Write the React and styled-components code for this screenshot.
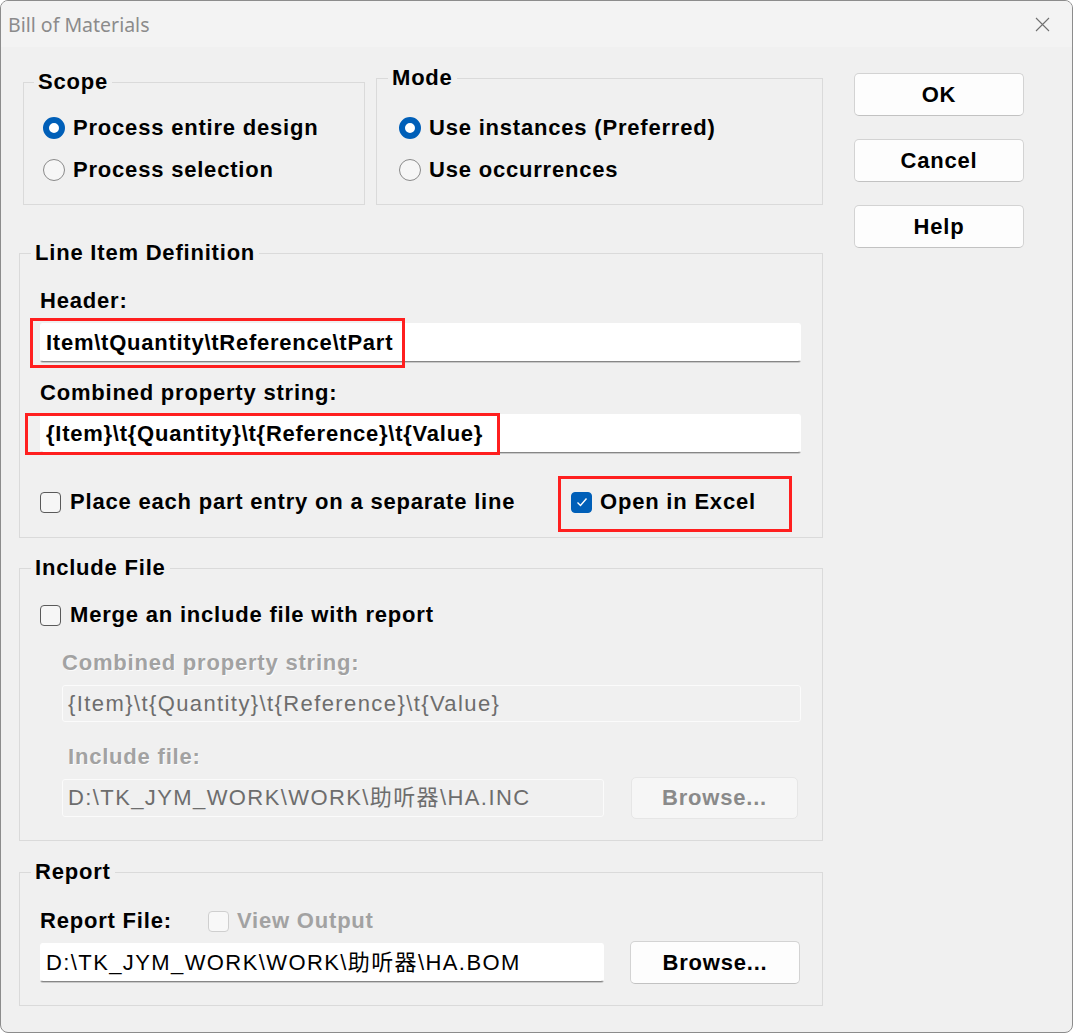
import React from "react";
import styled, { createGlobalStyle } from "styled-components";

const UI = `"Liberation Sans", "Noto Sans CJK SC", sans-serif`;

const GlobalStyle = createGlobalStyle`
  html, body { margin: 0; padding: 0; background: #ffffff; }
  body { font-family: ${UI}; }
  * { box-sizing: border-box; }
`;

const Window = styled.div`
  width: 1073px;
  height: 1033px;
  border: 1px solid #8c8c8c;
  border-radius: 8px;
  background: #f0f0f0;
  overflow: hidden;
  display: flex;
  flex-direction: column;
`;

const TitleBar = styled.div`
  flex: none;
  height: 46px;
  background: #f3f3f3;
  display: flex;
  align-items: center;
  justify-content: space-between;
  padding: 0 22px 0 7px;
`;

const Title = styled.span`
  font: 19.5px "Noto Sans", "Open Sans", sans-serif;
  color: #8b8b8b;
`;

const Body = styled.div`
  display: flex;
  gap: 31px;
  padding: 19px 0 0 18px;
`;

const Main = styled.div`
  width: 804px;
  display: flex;
  flex-direction: column;
`;

const Side = styled.div`
  width: 170px;
  display: flex;
  flex-direction: column;
  gap: 23px;
  padding-top: 7px;
`;

const TopRow = styled.div`
  display: flex;
  gap: 11px;
  align-items: stretch;
`;

const Group = styled.fieldset`
  margin: ${(p) => p.$mt || 0}px 0 0 ${(p) => p.$ml || 0}px;
  width: ${(p) => (p.$w ? `${p.$w}px` : "auto")};
  min-width: 0;
  padding: 0;
  border: 1px solid #dadada;
  display: flex;
  flex-direction: column;
`;

const Legend = styled.legend`
  margin-left: ${(p) => p.$ml ?? 11}px;
  padding: 0 4px;
  font: bold 22px/24px ${UI};
  letter-spacing: 0.8px;
  color: #000;
`;

const Content = styled.div`
  display: flex;
  flex-direction: column;
  padding: ${(p) => p.$pt}px ${(p) => p.$pr ?? 21}px ${(p) => p.$pb}px
    ${(p) => p.$pl ?? 20}px;
`;

const Label = styled.div`
  flex: none;
  width: ${(p) => (p.$w ? `${p.$w}px` : "auto")};
  height: 24px;
  margin-top: ${(p) => p.$mt || 0}px;
  margin-left: ${(p) => p.$ml || 0}px;
  font: bold 22px/24px ${UI};
  letter-spacing: 0.8px;
  white-space: nowrap;
  color: ${(p) => (p.$disabled ? "#a2a2a2" : "#000")};
  text-shadow: ${(p) => (p.$disabled ? "1px 1px 0 #fbfbfb" : "none")};
`;

const OptionRow = styled.label`
  display: flex;
  align-items: center;
  gap: ${(p) => p.$gap ?? 8}px;
  height: ${(p) => p.$h ?? 36}px;
  margin-top: ${(p) => p.$mt || 0}px;
  font: bold 22px/24px ${UI};
  letter-spacing: 0.8px;
  white-space: nowrap;
  color: ${(p) => (p.$disabled ? "#a2a2a2" : "#000")};
`;

const RadioDot = styled.span`
  flex: none;
  width: 22px;
  height: 22px;
  border-radius: 50%;
  background: ${(p) => (p.$on ? "#fff" : "#f6f6f6")};
  border: ${(p) => (p.$on ? "6.5px solid #005fb8" : "1.5px solid #8a8a8a")};
`;

const Box = styled.span`
  flex: none;
  width: 21px;
  height: 21px;
  border-radius: 4px;
  display: flex;
  align-items: center;
  justify-content: center;
  background: ${(p) => (p.$on ? "#005fb8" : p.$disabled ? "#f8f8f8" : "#f6f6f6")};
  border: 1.5px solid
    ${(p) => (p.$on ? "#005fb8" : p.$disabled ? "#cfcfcf" : "#5a5a5a")};
`;

const CheckRow = styled.div`
  display: grid;
  grid-template-columns: ${(p) => p.$cols || "auto"};
  align-items: center;
  height: 30px;
  margin-top: ${(p) => p.$mt || 0}px;
`;

const Field = styled.div`
  position: relative;
  flex: none;
  height: ${(p) => p.$h}px;
  width: ${(p) => (p.$w ? `${p.$w}px` : "auto")};
  margin-top: ${(p) => p.$mt || 0}px;
  padding-left: 5px;
  display: flex;
  align-items: center;
  white-space: nowrap;
  border-radius: 3px;
  font: ${(p) => (p.$bold ? "bold" : "normal")} 22px/24px ${UI};
  letter-spacing: ${(p) => (p.$bold ? 0.75 : 1.4)}px;
  background: ${(p) => (p.$disabled ? "#f0f0f0" : "#ffffff")};
  color: ${(p) => (p.$disabled ? "#6d6d6d" : "#000")};
  border: 1px solid ${(p) => (p.$disabled ? "#fbfbfb" : "#ffffff")};
  border-bottom: 1px solid ${(p) => (p.$disabled ? "#fbfbfb" : "#868686")};
  box-shadow: ${(p) => (p.$disabled ? "none" : "0 1px 0 #c9c9c9")};
`;

const FieldRow = styled.div`
  display: flex;
  align-items: center;
  gap: ${(p) => p.$gap}px;
  margin-top: ${(p) => p.$mt || 0}px;
  margin-left: ${(p) => p.$ml || 0}px;
`;

const Button = styled.button`
  flex: none;
  width: ${(p) => p.$w ?? 170}px;
  height: ${(p) => p.$h ?? 43}px;
  border-radius: 5px;
  font: bold 22px/24px ${UI};
  letter-spacing: 0.8px;
  padding: 0;
  color: ${(p) => (p.disabled ? "#8a8a8a" : "#000")};
  background: ${(p) => (p.disabled ? "#f6f6f6" : "#fdfdfd")};
  border: 1px solid ${(p) => (p.disabled ? "#e6e6e6" : "#d3d3d3")};
  border-bottom-color: ${(p) => (p.disabled ? "#e6e6e6" : "#c2c2c2")};
`;

const Annotated = styled.div`
  position: relative;
  display: flex;
  align-items: center;
  gap: 8px;
`;

const RedMark = styled.span`
  position: absolute;
  left: ${(p) => p.$x}px;
  top: ${(p) => p.$y}px;
  width: ${(p) => p.$w}px;
  height: ${(p) => p.$h}px;
  border: 3px solid #ff1f1f;
  pointer-events: none;
`;

const Indent = styled.div`
  margin-left: 22px;
  display: flex;
  flex-direction: column;
`;

const Check = ({ on, disabled }) => (
  <Box $on={on} $disabled={disabled}>
    {on && (
      <svg width="14" height="14" viewBox="0 0 14 14">
        <polyline
          points="2.5,7.5 5.5,10.5 11.5,3.5"
          fill="none"
          stroke="#fff"
          strokeWidth="1.4"
        />
      </svg>
    )}
  </Box>
);

export default function App() {
  return (
    <>
      <GlobalStyle />
      <Window>
        <TitleBar>
          <Title>Bill of Materials</Title>
          <svg width="15" height="15" viewBox="0 0 15 15">
            <path d="M1 1 L14 14 M14 1 L1 14" stroke="#707070" strokeWidth="1.1" />
          </svg>
        </TitleBar>
        <Body>
          <Main>
            <TopRow>
              <Group $w={342} $ml={4} $mt={4}>
                <Legend $ml={10}>Scope</Legend>
                <Content $pt={16} $pb={16} $pl={19}>
                  <OptionRow>
                    <RadioDot $on />
                    Process entire design
                  </OptionRow>
                  <OptionRow $mt={6}>
                    <RadioDot />
                    Process selection
                  </OptionRow>
                </Content>
              </Group>
              <Group $w={447}>
                <Legend>Mode</Legend>
                <Content $pt={20} $pb={16} $pl={22}>
                  <OptionRow>
                    <RadioDot $on />
                    Use instances (Preferred)
                  </OptionRow>
                  <OptionRow $mt={6}>
                    <RadioDot />
                    Use occurrences
                  </OptionRow>
                </Content>
              </Group>
            </TopRow>

            <Group $mt={36}>
              <Legend>Line Item Definition</Legend>
              <Content $pt={24} $pb={20}>
                <Label>Header:</Label>
                <Field $h={39} $mt={10} $bold>
                  Item\tQuantity\tReference\tPart
                  <RedMark $x={-11} $y={-6} $w={375} $h={50} />
                </Field>
                <Label $mt={19}>Combined property string:</Label>
                <Field $h={39} $mt={9} $bold>
                  {"{Item}\\t{Quantity}\\t{Reference}\\t{Value}"}
                  <RedMark $x={-16} $y={-2} $w={475} $h={42} />
                </Field>
                <CheckRow $mt={34} $cols="531px auto">
                  <OptionRow $h={30} $gap={9}>
                    <Check />
                    Place each part entry on a separate line
                  </OptionRow>
                  <Annotated>
                    <Check on />
                    <OptionRow $h={30}>Open in Excel</OptionRow>
                    <RedMark $x={-13} $y={-11} $w={234} $h={56} />
                  </Annotated>
                </CheckRow>
              </Content>
            </Group>

            <Group $mt={18}>
              <Legend>Include File</Legend>
              <Content $pt={20} $pb={21}>
                <CheckRow>
                  <OptionRow $h={30} $gap={9}>
                    <Check />
                    Merge an include file with report
                  </OptionRow>
                </CheckRow>
                <Indent>
                  <Label $mt={21} $disabled>
                    Combined property string:
                  </Label>
                  <Field $h={37} $mt={10} $disabled>
                    {"{Item}\\t{Quantity}\\t{Reference}\\t{Value}"}
                  </Field>
                  <Label $mt={23} $ml={6} $disabled>
                    Include file:
                  </Label>
                  <FieldRow $gap={27} $mt={8}>
                    <Field $h={38} $w={542} $disabled>
                      D:\TK_JYM_WORK\WORK\助听器\HA.INC
                    </Field>
                    <Button disabled $w={167} $h={42}>
                      Browse...
                    </Button>
                  </FieldRow>
                </Indent>
              </Content>
            </Group>

            <Group $mt={19}>
              <Legend>Report</Legend>
              <Content $pt={25} $pb={21}>
                <FieldRow $gap={0}>
                  <Label $w={168}>Report File:</Label>
                  <OptionRow $h={24} $disabled>
                    <Check disabled />
                    View Output
                  </OptionRow>
                </FieldRow>
                <FieldRow $gap={26} $mt={8}>
                  <Field $h={39} $w={564}>
                    D:\TK_JYM_WORK\WORK\助听器\HA.BOM
                  </Field>
                  <Button>Browse...</Button>
                </FieldRow>
              </Content>
            </Group>
          </Main>
          <Side>
            <Button>OK</Button>
            <Button>Cancel</Button>
            <Button>Help</Button>
          </Side>
        </Body>
      </Window>
    </>
  );
}
